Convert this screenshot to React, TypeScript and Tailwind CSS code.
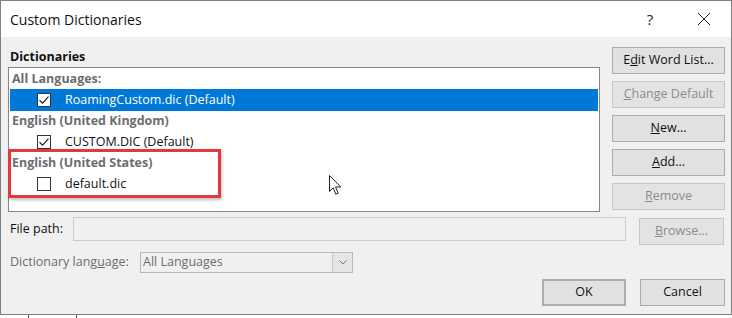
import React from "react";

const font = { fontFamily: '"Segoe UI", "Open Sans", "Noto Sans", sans-serif' };

function CheckBox({ checked }: { checked: boolean }) {
  return (
    <span className="w-[14px] h-[14px] border border-[#333333] bg-white flex items-center justify-center shrink-0">
      {checked && (
        <svg width="12" height="12" viewBox="0 0 12 12">
          <path d="M1.5 6.2 L4.6 9.2 L10.5 2.6" fill="none" stroke="#222" strokeWidth="1.2" />
        </svg>
      )}
    </span>
  );
}

function Btn({
  children,
  disabled,
  className = "",
}: {
  children: React.ReactNode;
  disabled?: boolean;
  className?: string;
}) {
  return (
    <div
      className={`h-[27px] flex items-center justify-center text-[12.5px] border ${
        disabled
          ? "bg-[#e3e3e3] border-[#c6c6c6] text-[#8c8c8c]"
          : "bg-[#e1e1e1] border-[#adadad] text-[#111111]"
      } ${className}`}
    >
      {children}
    </div>
  );
}

export default function App() {
  return (
    <div className="w-[732px] h-[318px] bg-white overflow-hidden select-none" style={font}>
      <div className="h-[315px] border border-[#7f7f7f] bg-[#f0f0f0] flex flex-col">
        {/* title bar */}
        <div className="h-[36px] bg-white flex items-center shrink-0">
          <span className="pl-[9px] text-[14px] text-[#111] flex-1">Custom Dictionaries</span>
          <span className="text-[15px] text-[#222] w-[20px] text-center mr-[37px]">?</span>
          <svg width="14" height="14" viewBox="0 0 14 14" className="mr-[20px]">
            <path d="M1 1 L13 13 M13 1 L1 13" stroke="#222" strokeWidth="1" />
          </svg>
        </div>

        {/* body */}
        <div className="flex-1 flex flex-col pl-[7px] pr-[6px] pt-[10px]">
          <div className="flex">
            <div className="w-[592px] flex flex-col">
              <div className="h-[20px] pl-[2px] text-[12.5px] font-bold text-[#111] flex items-center">
                Dictionaries
              </div>
              <div className="relative h-[145px] bg-white border border-[#828790] p-px">
                <div className="h-[20px] pl-[2px] flex items-center text-[12.5px] font-bold text-[#6d6d6d]">
                  All Languages:
                </div>
                <div className="h-[22px] bg-[#0078d7] flex items-center pl-[27px] gap-[14px] text-[12.5px] text-white">
                  <CheckBox checked />
                  <span>RoamingCustom.dic (Default)</span>
                </div>
                <div className="h-[20px] pl-[2px] flex items-center text-[12.5px] font-bold text-[#6d6d6d]">
                  English (United Kingdom)
                </div>
                <div className="h-[22px] flex items-center pl-[27px] gap-[14px] text-[12.5px] text-[#111]">
                  <CheckBox checked />
                  <span>CUSTOM.DIC (Default)</span>
                </div>
                <div className="h-[20px] pl-[2px] flex items-center text-[12.5px] font-bold text-[#6d6d6d]">
                  English (United States)
                </div>
                <div className="h-[22px] flex items-center pl-[27px] gap-[14px] text-[12.5px] text-[#111]">
                  <CheckBox checked={false} />
                  <span>default.dic</span>
                </div>

                {/* red annotation box */}
                <div className="absolute left-[-1px] top-[81px] w-[213px] h-[49px] border-[3px] border-[#e0393e] shadow-[1px_2px_3px_rgba(0,0,0,0.25)]" />

                {/* mouse cursor */}
                <svg
                  className="absolute left-[320px] top-[107px]"
                  width="14"
                  height="21"
                  viewBox="0 0 14 21"
                >
                  <path
                    d="M0.5 0.5 L0.5 16.5 L4.2 12.9 L6.8 19.2 L9.2 18.2 L6.6 12 L11.8 12 Z"
                    fill="white"
                    stroke="#222"
                    strokeWidth="1"
                    strokeLinejoin="round"
                  />
                </svg>
              </div>
            </div>

            <div className="ml-[12px] w-[113px] flex flex-col gap-[7px]">
              <Btn>
                <span>
                  E<span className="underline">d</span>it Word List...
                </span>
              </Btn>
              <Btn disabled>
                <span>
                  <span className="underline">C</span>hange Default
                </span>
              </Btn>
              <Btn>
                <span>
                  <span className="underline">N</span>ew...
                </span>
              </Btn>
              <Btn>
                <span>
                  <span className="underline">A</span>dd...
                </span>
              </Btn>
              <Btn disabled>
                <span>
                  <span className="underline">R</span>emove
                </span>
              </Btn>
            </div>
          </div>

          {/* file path row */}
          <div className="flex items-start mt-[5px]">
            <span className="w-[65px] pl-[2px] h-[24px] flex items-center text-[12.5px] text-[#111]">
              File path:
            </span>
            <div className="w-[553px] h-[24px] border border-[#cccccc] bg-[#f0f0f0]" />
            <Btn disabled className="ml-[13px] w-[85px] mt-px">
              <span>
                <span className="underline">B</span>rowse...
              </span>
            </Btn>
          </div>

          {/* dictionary language row */}
          <div className="flex items-center mt-[7px]">
            <span className="w-[132px] pl-[2px] text-[12.5px] text-[#6d6d6d]">
              Dictionary lang<span className="underline">u</span>age:
            </span>
            <div className="w-[213px] h-[21px] border border-[#b9b9b9] bg-[#f0f0f0] flex">
              <span className="flex-1 pl-[2px] flex items-center text-[12.5px] text-[#6d6d6d]">
                All Languages
              </span>
              <span className="w-[20px] bg-[#e5e5e5] border-l border-[#c6c6c6] flex items-center justify-center">
                <svg width="8" height="5" viewBox="0 0 8 5">
                  <path d="M0.5 0.5 L4 4 L7.5 0.5" fill="none" stroke="#777" strokeWidth="1" />
                </svg>
              </span>
            </div>
          </div>

          {/* ok / cancel */}
          <div className="flex justify-end mt-[6px] gap-[14px]">
            <Btn className="w-[84px] border-2 border-[#0078d7]">OK</Btn>
            <Btn className="w-[85px]">Cancel</Btn>
          </div>
        </div>
      </div>

      {/* background behind dialog, cut off */}
      <div className="h-[3px] overflow-hidden flex bg-white">
        <div className="ml-[28px] w-px h-full bg-[#555]" />
        <div className="ml-[47px] w-px h-full bg-[#555]" />
      </div>
    </div>
  );
}
